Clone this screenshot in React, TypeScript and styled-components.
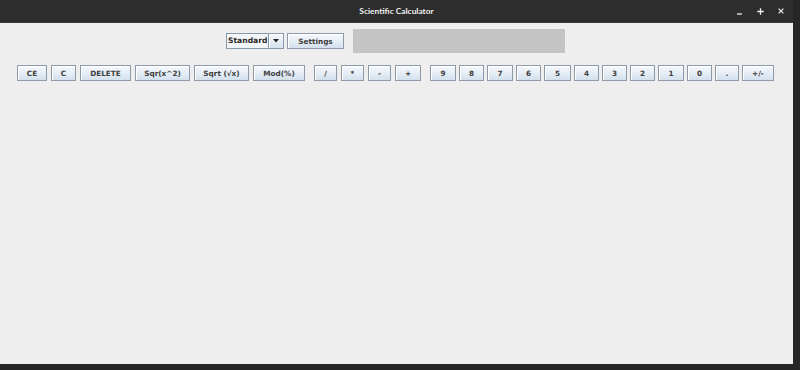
import React from "react";
import styled, { createGlobalStyle } from "styled-components";

const GlobalStyle = createGlobalStyle`
  html, body {
    margin: 0;
    padding: 0;
    width: 800px;
    height: 370px;
    overflow: hidden;
    background: #262626;
  }
`;

const Frame = styled.div`
  width: 793px;
  height: 364px;
  display: flex;
  flex-direction: column;
  background: #eeeeee;
`;

const TitleBar = styled.div`
  height: 22px;
  display: grid;
  grid-template-columns: 1fr auto 1fr;
  align-items: center;
  background: #2d2d2d;
  border-bottom: 1px solid #3a3a3a;
`;

const Title = styled.div`
  grid-column: 2;
  color: #f0f0f0;
  font-family: Lato, "Open Sans", sans-serif;
  font-weight: 700;
  font-size: 8.4px;
  padding-bottom: 1px;
`;

const Controls = styled.div`
  grid-column: 3;
  justify-self: end;
  display: flex;
  align-items: center;
  gap: 14px;
  padding-right: 9px;
  svg {
    display: block;
  }
`;

const Body = styled.div`
  flex: 1;
  display: flex;
  flex-direction: column;
  align-items: center;
  padding: 6px 2px 0 0;
  gap: 12px;
`;

const TopRow = styled.div`
  height: 24px;
  display: flex;
  align-items: center;
`;

const Combo = styled.div`
  width: 58px;
  height: 16px;
  box-sizing: border-box;
  margin-top: -1px;
  display: flex;
  border: 1px solid #8b98a6;
  background: #f3f6f9;
`;

const ComboText = styled.div`
  flex: 1;
  display: flex;
  align-items: center;
  padding-left: 1px;
  font-family: "DejaVu Sans", sans-serif;
  font-weight: 700;
  font-size: 7.6px;
  color: #2a2a2a;
`;

const ComboArrow = styled.div`
  width: 14px;
  display: flex;
  align-items: center;
  justify-content: center;
  border-left: 1px solid #8b98a6;
  background: linear-gradient(#f6f9fc, #d4e1ee);
  box-shadow: inset 1px 1px 0 #ffffff;
`;

const Btn = styled.div<{ $w: number }>`
  width: ${(p) => p.$w}px;
  height: 16px;
  box-sizing: border-box;
  display: flex;
  align-items: center;
  justify-content: center;
  border: 1px solid #8e9aa7;
  box-shadow: inset 1px 1px 0 #ffffff;
  background: linear-gradient(#f6f9fc 0%, #e8eff7 45%, #d3e0ed 100%);
  font-family: "DejaVu Sans", sans-serif;
  font-weight: 700;
  font-size: 7.3px;
  color: #404040;
  white-space: nowrap;
`;

const Display = styled.div`
  width: 212px;
  height: 24px;
  background: #c4c4c4;
`;

const KeyRow = styled.div`
  display: flex;
  align-items: center;
  gap: 9px;
`;

const KeyGroup = styled.div<{ $gap: number }>`
  display: flex;
  gap: ${(p) => p.$gap}px;
`;

type Key = [string, number];

const functionKeys: Key[] = [
  ["CE", 30],
  ["C", 25],
  ["DELETE", 51],
  ["Sqr(x^2)", 55],
  ["Sqrt (\u221Ax)", 55],
  ["Mod(%)", 52],
];

const operatorKeys: Key[] = [
  ["/", 23],
  ["*", 23],
  ["-", 23],
  ["+", 26],
];

const digitKeys: Key[] = [
  ["9", 26],
  ["8", 25],
  ["7", 26],
  ["6", 25],
  ["5", 27],
  ["4", 25],
  ["3", 25],
  ["2", 25],
  ["1", 26],
  ["0", 25],
  [".", 24],
  ["+/-", 32],
];

const App = () => {
  return (
    <>
      <GlobalStyle />
      <Frame>
        <TitleBar>
          <Title>Scientific Calculator</Title>
          <Controls>
            <svg width="7" height="7" viewBox="0 0 7 7">
              <path d="M1 6h5" stroke="#f0f0f0" strokeWidth="1.3" />
            </svg>
            <svg width="7" height="7" viewBox="0 0 7 7">
              <path d="M3.5 0.3v6.4M0.3 3.5h6.4" stroke="#f0f0f0" strokeWidth="1.3" />
            </svg>
            <svg width="6" height="6" viewBox="0 0 6 6">
              <path d="M0.6 0.6l4.8 4.8M5.4 0.6l-4.8 4.8" stroke="#e6e6e6" strokeWidth="1.3" />
            </svg>
          </Controls>
        </TitleBar>
        <Body>
          <TopRow>
            <Combo>
              <ComboText>Standard</ComboText>
              <ComboArrow>
                <svg width="6" height="4" viewBox="0 0 6 4">
                  <path d="M0 0h6L3 3.5z" fill="#222" />
                </svg>
              </ComboArrow>
            </Combo>
            <Btn $w={57} style={{ marginLeft: 3, marginRight: 9 }}>
              Settings
            </Btn>
            <Display />
          </TopRow>
          <KeyRow>
            <KeyGroup $gap={4}>
              {functionKeys.map(([label, w]) => (
                <Btn key={label} $w={w}>
                  {label}
                </Btn>
              ))}
            </KeyGroup>
            <KeyGroup $gap={4}>
              {operatorKeys.map(([label, w]) => (
                <Btn key={label} $w={w}>
                  {label}
                </Btn>
              ))}
            </KeyGroup>
            <KeyGroup $gap={3}>
              {digitKeys.map(([label, w]) => (
                <Btn key={label} $w={w}>
                  {label}
                </Btn>
              ))}
            </KeyGroup>
          </KeyRow>
        </Body>
      </Frame>
    </>
  );
};

export default App;
